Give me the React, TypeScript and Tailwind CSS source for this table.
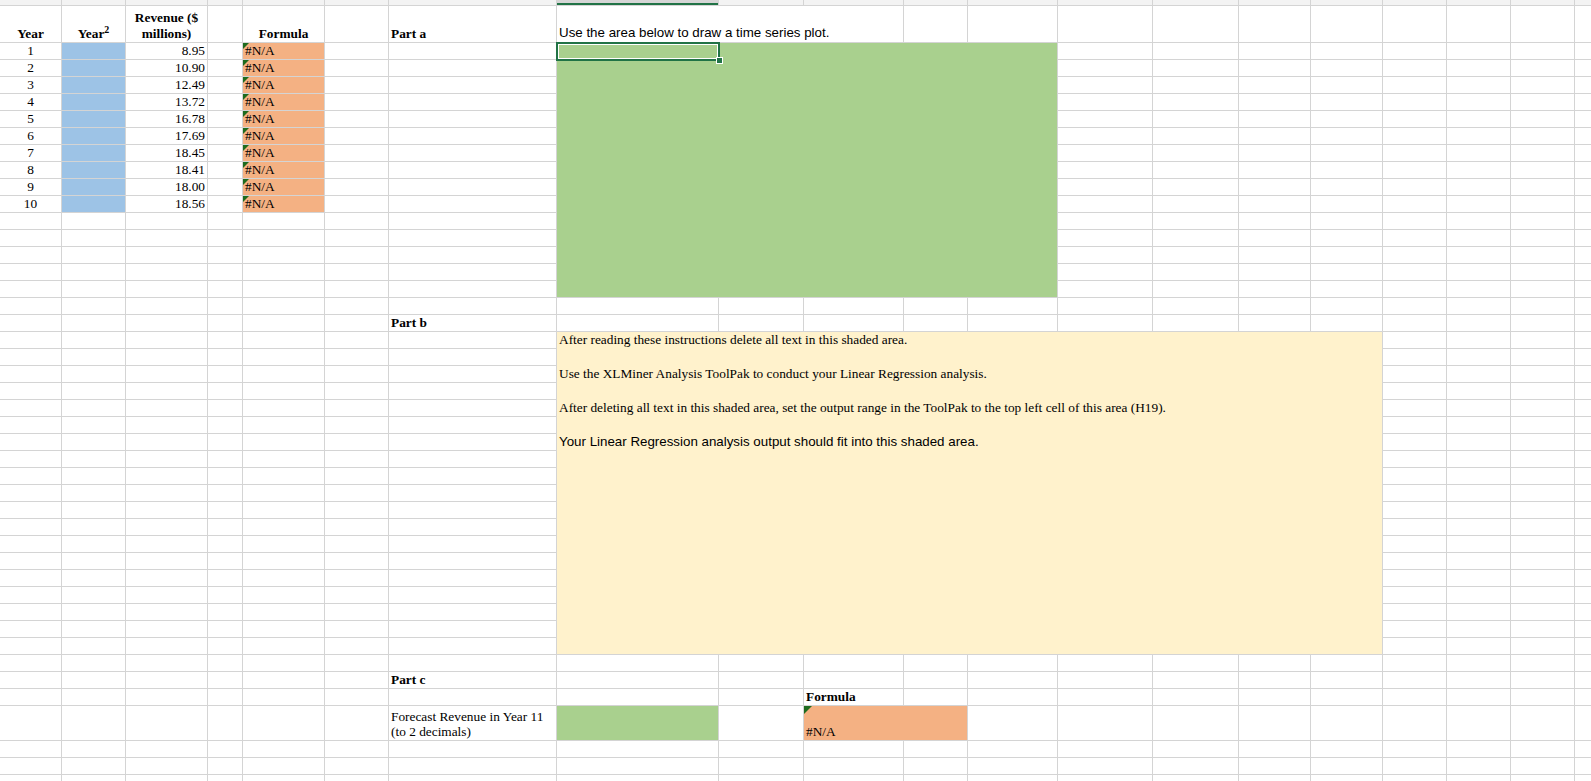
import type { ReactNode } from 'react'

const revenue = ['8.95', '10.90', '12.49', '13.72', '16.78', '17.69', '18.45', '18.41', '18.00', '18.56']

// merged / shaded blocks, in sheet coordinates (row 1 = first sheet row, col 1 = A)
const spans = [
  { r: 1, c: 8, rs: 1, cs: 3 },
  { r: 2, c: 8, rs: 15, cs: 5 },
  { r: 19, c: 8, rs: 19, cs: 9 },
  { r: 41, c: 10, rs: 1, cs: 2 },
]

function covered(r: number, c: number) {
  return spans.some(s => r >= s.r && r < s.r + s.rs && c >= s.c && c < s.c + s.cs)
}

const txt = 'flex items-end px-[2px] leading-4 whitespace-nowrap'
const sans = "font-['Liberation_Sans',Arial,sans-serif]"

function ErrorMark({ size }: { size: number }) {
  return (
    <svg className="absolute left-0 top-0" width={size} height={size} viewBox="0 0 6 6">
      <path d="M0 0H6L0 6Z" fill="#1e6b1e" />
    </svg>
  )
}

function Text({ className = '', children }: { className?: string; children: ReactNode }) {
  return <div className={`${txt} bg-white ${className}`}>{children}</div>
}

function Cell({ r, c }: { r: number; c: number }) {
  if (r === 0) {
    return <div className={c === 8 ? 'bg-[#d6d6d6] border-b-2 border-[#217346]' : 'bg-[#f3f3f3]'} />
  }
  if (r === 1) {
    if (c === 1) return <Text className="justify-center font-bold">Year</Text>
    if (c === 2) {
      return (
        <Text className="justify-center font-bold">
          <span>
            Year<sup>2</sup>
          </span>
        </Text>
      )
    }
    if (c === 3) return <Text className="justify-center text-center font-bold !whitespace-normal">Revenue ($ millions)</Text>
    if (c === 5) return <Text className="justify-center font-bold">Formula</Text>
    if (c === 7) return <Text className="font-bold">Part a</Text>
  }
  if (r >= 2 && r <= 11) {
    const i = r - 2
    if (c === 1) return <Text className="justify-center">{i + 1}</Text>
    if (c === 2) return <div className="bg-[#9dc3e6]" />
    if (c === 3) return <Text className="justify-end">{revenue[i]}</Text>
    if (c === 5) {
      return (
        <div className={`${txt} relative bg-[#f4b183]`}>
          <ErrorMark size={6} />
          #N/A
        </div>
      )
    }
  }
  if (r === 18 && c === 7) return <Text className="font-bold">Part b</Text>
  if (r === 39 && c === 7) return <Text className="font-bold">Part c</Text>
  if (r === 40 && c === 10) return <Text className="font-bold">Formula</Text>
  if (r === 41 && c === 7) {
    return (
      <Text className="leading-[15px] pb-px">
        <div>
          Forecast Revenue in Year 11
          <br />
          (to 2 decimals)
        </div>
      </Text>
    )
  }
  if (r === 41 && c === 8) return <div className="bg-[#a9d08e]" />
  return <div className="bg-white" />
}

export default function App() {
  const cells = []
  for (let r = 0; r <= 44; r++) {
    for (let c = 1; c <= 20; c++) {
      if (!covered(r, c)) cells.push(<Cell key={`${r}-${c}`} r={r} c={c} />)
    }
  }

  return (
    <div className="h-screen w-screen overflow-hidden bg-white">
      <div className="grid w-max gap-px bg-[#d4d4d4] text-[13.33px] text-black font-['Liberation_Serif','Times_New_Roman',serif] grid-cols-[61px_63px_81px_34px_81px_63px_167px_161px_84px_99px_63px_89px_94px_85px_71px_71px_63px_63px_63px_63px] grid-rows-[5px_36px_repeat(39,16px)_34px_repeat(3,16px)]">
        <div className={`row-start-2 col-start-8 col-span-3 bg-white ${txt} ${sans} pb-px`}>
          Use the area below to draw a time series plot.
        </div>

        <div className="row-start-3 row-span-15 col-start-8 col-span-5 relative bg-[#a9d08e]">
          <div className="absolute -left-px -top-px z-10 w-[164px] h-[19px] border-2 border-[#217346]">
            <div className="h-full border border-white" />
            <div className="absolute left-[158px] top-[13px] w-[7px] h-[7px] bg-[#217346] border border-white" />
          </div>
        </div>

        <div className="row-start-20 row-span-19 col-start-8 col-span-9 flex flex-col gap-[18px] bg-[#fff2cc] px-[2px] leading-4 whitespace-nowrap">
          <div className="h-4">After reading these instructions delete all text in this shaded area.</div>
          <div className="h-4">Use the XLMiner Analysis ToolPak to conduct your Linear Regression analysis.</div>
          <div className="h-4">
            After deleting all text in this shaded area, set the output range in the ToolPak to the top left cell of this area (H19).
          </div>
          <div className={`h-4 ${sans}`}>Your Linear Regression analysis output should fit into this shaded area.</div>
        </div>

        <div className={`row-start-42 col-start-10 col-span-2 relative bg-[#f4b183] ${txt}`}>
          <ErrorMark size={8} />
          #N/A
        </div>

        {cells}
      </div>
    </div>
  )
}
